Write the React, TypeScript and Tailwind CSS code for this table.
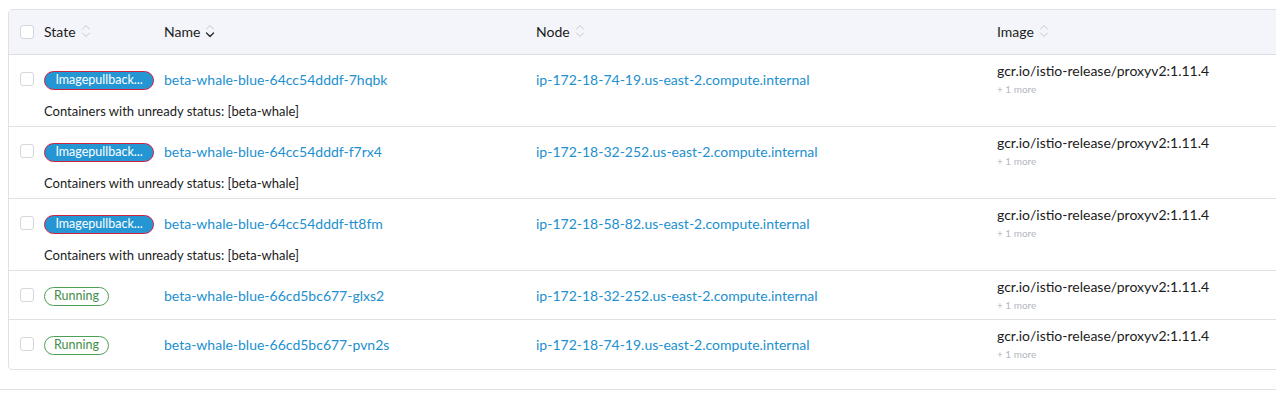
import React from 'react'

type Pod = {
  state: 'error' | 'running'
  name: string
  node: string
  image: string
  detail?: string
}

const pods: Pod[] = [
  {
    state: 'error',
    name: 'beta-whale-blue-64cc54dddf-7hqbk',
    node: 'ip-172-18-74-19.us-east-2.compute.internal',
    image: 'gcr.io/istio-release/proxyv2:1.11.4',
    detail: 'Containers with unready status: [beta-whale]',
  },
  {
    state: 'error',
    name: 'beta-whale-blue-64cc54dddf-f7rx4',
    node: 'ip-172-18-32-252.us-east-2.compute.internal',
    image: 'gcr.io/istio-release/proxyv2:1.11.4',
    detail: 'Containers with unready status: [beta-whale]',
  },
  {
    state: 'error',
    name: 'beta-whale-blue-64cc54dddf-tt8fm',
    node: 'ip-172-18-58-82.us-east-2.compute.internal',
    image: 'gcr.io/istio-release/proxyv2:1.11.4',
    detail: 'Containers with unready status: [beta-whale]',
  },
  {
    state: 'running',
    name: 'beta-whale-blue-66cd5bc677-glxs2',
    node: 'ip-172-18-32-252.us-east-2.compute.internal',
    image: 'gcr.io/istio-release/proxyv2:1.11.4',
  },
  {
    state: 'running',
    name: 'beta-whale-blue-66cd5bc677-pvn2s',
    node: 'ip-172-18-74-19.us-east-2.compute.internal',
    image: 'gcr.io/istio-release/proxyv2:1.11.4',
  },
]

function SortIcon({ active = false }: { active?: boolean }) {
  return (
    <svg width="10" height="14" viewBox="0 0 10 14" fill="none" className="ml-[5px]">
      <path d="M1.5 5 L5 1.5 L8.5 5" stroke="#c4c7d0" strokeWidth="1" strokeLinecap="round" strokeLinejoin="round" />
      <path
        d="M1.5 9 L5 12.5 L8.5 9"
        stroke={active ? '#2b2d33' : '#c4c7d0'}
        strokeWidth={active ? 1.4 : 1}
        strokeLinecap="round"
        strokeLinejoin="round"
      />
    </svg>
  )
}

function Checkbox() {
  return <div className="ml-[11px] h-[14px] w-[14px] rounded-[3px] border border-[#d5d7de] bg-white" />
}

function StateBadge({ state }: { state: Pod['state'] }) {
  if (state === 'error') {
    return (
      <span className="inline-flex h-[19px] w-[110px] items-center justify-center rounded-full border border-[#d3203d] bg-[#2596d4] text-[12.5px] leading-none text-white">
        Imagepullback...
      </span>
    )
  }
  return (
    <span className="inline-flex h-[19px] w-[65px] items-center justify-center rounded-full border border-[#4e9f56] bg-white text-[12.5px] leading-none text-[#3f8e47]">
      Running
    </span>
  )
}

export default function App() {
  return (
    <div className="h-[396px] w-full overflow-hidden bg-white pt-[9px] text-[14px] text-[#1b1c21]" style={{ fontFamily: 'Lato, "Open Sans", sans-serif' }}>
      <div className="ml-[8px] w-[1300px] rounded-[4px] border border-[#e0e1e7] pb-[1px]">
        {/* header */}
        <div className="flex h-[45px] items-center border-b border-[#dcdee5] bg-[#f4f5fa] pb-[2px]">
          <div className="w-[35px] pt-[2px]">
            <Checkbox />
          </div>
          <div className="flex w-[120px] items-center">
            State
            <SortIcon />
          </div>
          <div className="flex w-[372px] items-center">
            Name
            <SortIcon active />
          </div>
          <div className="flex w-[461px] items-center">
            Node
            <SortIcon />
          </div>
          <div className="flex items-center">
            Image
            <SortIcon />
          </div>
        </div>

        {pods.map((pod, i) => (
          <div key={pod.name} className={i < pods.length - 1 ? 'border-b border-[#e0e1e7]' : ''}>
            <div className="flex h-[48px] items-center">
              <div className="w-[35px]">
                <Checkbox />
              </div>
              <div className="w-[120px]">
                <StateBadge state={pod.state} />
              </div>
              <div className="w-[372px] text-[#2190cf]">{pod.name}</div>
              <div className="w-[461px] text-[#2190cf]">{pod.node}</div>
              <div className="flex flex-col">
                <span className="leading-[19px]">{pod.image}</span>
                <span className="text-[10px] leading-[18px] text-[#b3b6c2]">+ 1 more</span>
              </div>
            </div>
            {pod.detail && <div className="h-[23px] pl-[35px] text-[13px] leading-[16px]">{pod.detail}</div>}
          </div>
        ))}
      </div>
      <div className="mt-[19px] border-t border-[#e0e1e7]" />
    </div>
  )
}
